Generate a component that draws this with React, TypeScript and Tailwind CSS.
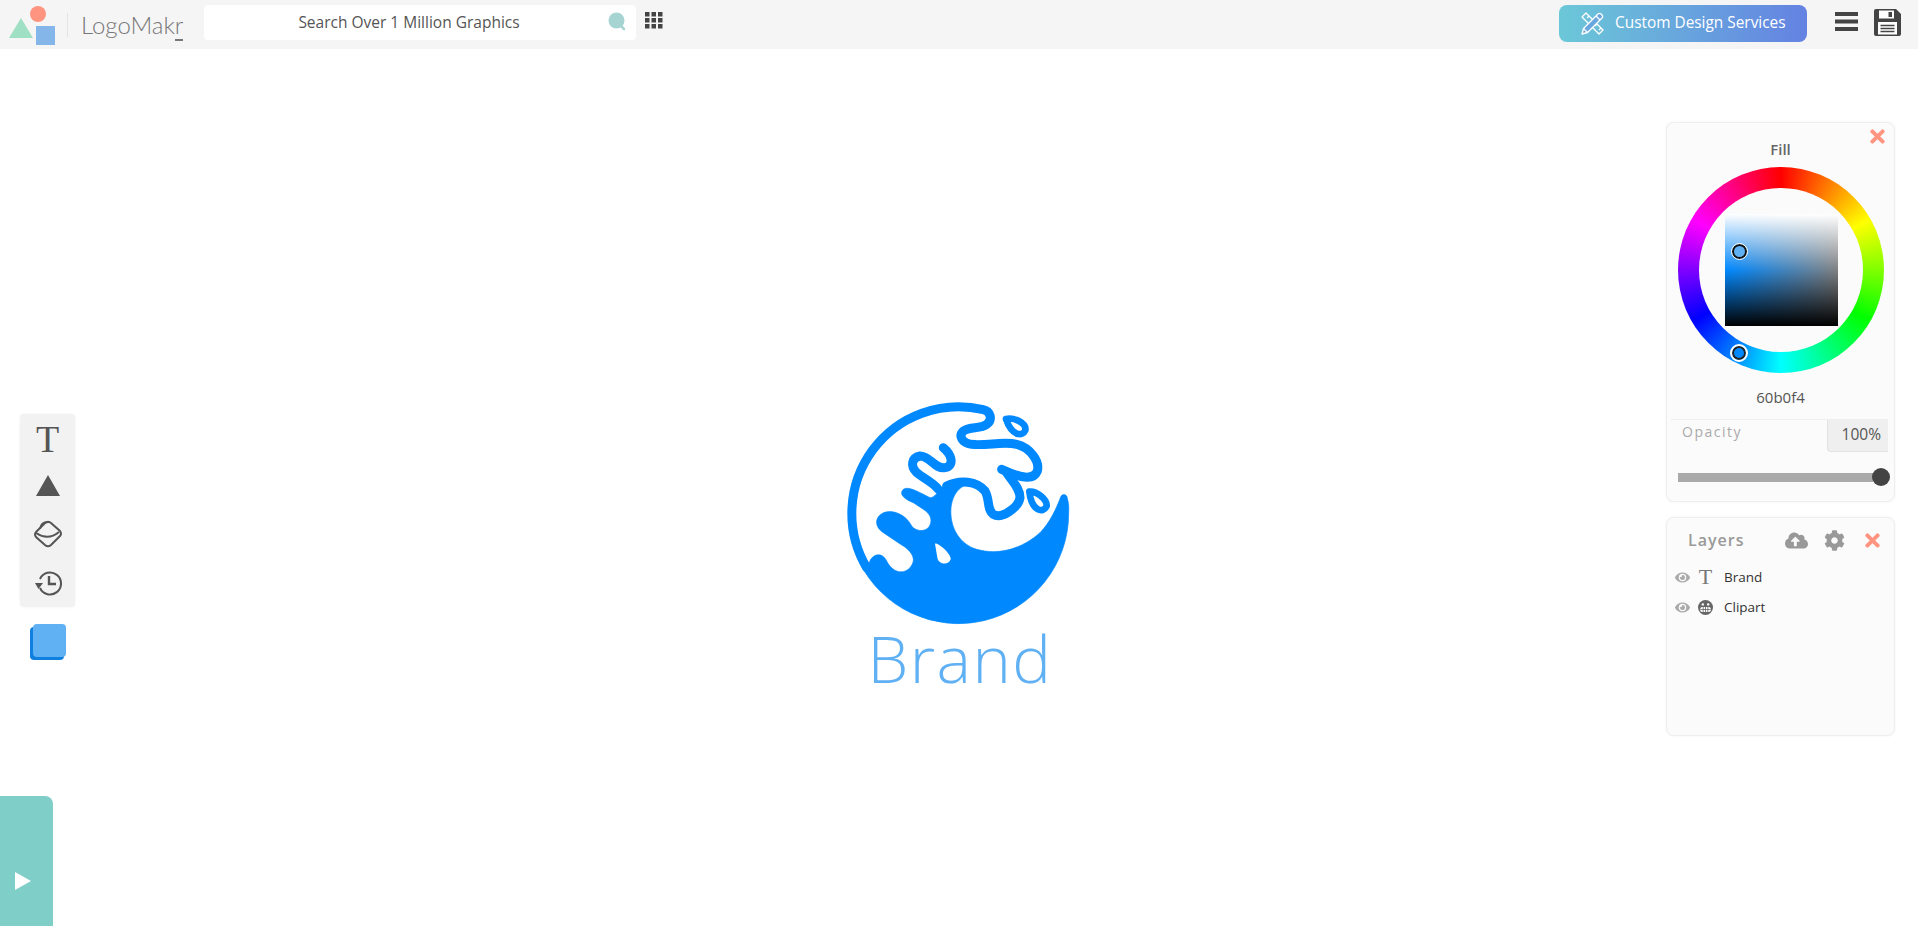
import React from 'react';
import { FaCloudUploadAlt, FaCog, FaEye, FaTimes } from 'react-icons/fa';

const sans = 'font-["Open_Sans",sans-serif]';

const BrandMark = () => (
  <svg viewBox="0 0 56 44" className="w-[56px] h-[44px]">
    <polygon points="9,35 21,15 33,35" fill="#9fe0c4" />
    <circle cx="38" cy="11" r="8" fill="#ff9580" />
    <rect x="36" y="23" width="19" height="19" fill="#85b6ea" />
  </svg>
);

const SplashLogo = () => (
  <svg width="260" height="240" viewBox="0 0 780 720" fill="none">
    <path
      d="M118,515 C125,490 155,480 170,510 C185,540 215,555 240,530 C262,505 245,480 215,462 L160,425 C135,408 135,385 150,372 C175,350 225,365 245,405 C260,425 300,425 303,390 C303,365 280,355 250,335 C225,325 205,310 220,295 C235,285 260,300 300,320 C315,320 325,300 335,290 C365,265 410,262 440,275 C410,275 370,290 363,350 C358,410 390,460 440,475 C510,495 580,470 630,425 C660,395 680,350 692,318 C697,306 712,310 712,322 C718,345 716,355 716,367 A331,331 0 0 1 89,515 Z"
      fill="#0088ff"
      stroke="#0088ff"
      strokeWidth="2"
      strokeLinejoin="round"
    />
    <g stroke="#0088ff" strokeWidth="27" strokeLinecap="round" strokeLinejoin="round">
      <path d="M110,530 A320,320 0 0 1 460,56 C480,60 490,85 470,100 C450,115 420,105 400,120 C385,135 395,155 425,160 C470,165 520,150 560,160 C600,170 630,210 622,240 C610,270 570,260 515,235" />
      <path d="M340,170 C365,190 375,225 345,230 C315,235 300,195 270,195 C245,200 240,225 260,245 C280,262 310,275 325,295" />
      <path d="M350,285 C390,265 440,270 465,300 C480,325 470,355 490,370 C515,385 565,350 570,320 C570,290 545,270 530,245" />
      <path strokeWidth="20" d="M528,84 C550,78 590,95 586,118 C578,138 545,135 528,84 Z" />
      <path strokeWidth="20" d="M598,302 C620,300 652,325 650,345 C640,368 605,362 598,302 Z" />
    </g>
    <path d="M315,458 C325,455 365,490 362,505 C355,525 325,520 322,500 Z" fill="#ffffff" />
  </svg>
);

const BucketIcon = () => (
  <svg width="30" height="28" viewBox="0 0 30 28" fill="none" stroke="#555" strokeWidth="2">
    <path d="M3,12 L12,3 Q15,0.5 18,3 L27,11 Q29,14 27,16 L18,25 Q15,27.5 12,25 L3,17 Q1,14.5 3,12 Z" />
    <path d="M3,13 Q15,21 26,12" />
    <path d="M7,9 Q8,1 17,2" />
  </svg>
);

const HistoryIcon = () => (
  <svg width="28" height="26" viewBox="0 0 28 26" fill="none" stroke="#555" strokeWidth="2">
    <path d="M6,9 A11,11 0 1 1 6,18" />
    <path d="M1,13 L9,13 L4.5,19 Z" fill="#555" stroke="none" />
    <path d="M15,6 V14 H22" strokeWidth="2.4" />
  </svg>
);

const SearchIcon = () => (
  <svg width="19" height="19" viewBox="0 0 19 19">
    <circle cx="8.5" cy="8.5" r="8" fill="#a5d4d2" />
    <path d="M13,14 L16,17" stroke="#a5d4d2" strokeWidth="2.5" strokeLinecap="round" />
  </svg>
);

const GridIcon = () => (
  <svg width="18" height="17" viewBox="0 0 18 17" fill="#444">
    {[0, 6.5, 13].map((x) =>
      [0, 6, 12].map((y) => <rect key={`${x}-${y}`} x={x} y={y} width="4.5" height="4.5" />)
    )}
  </svg>
);

const MenuIcon = () => (
  <svg width="23" height="19" viewBox="0 0 23 19" fill="#444">
    <rect y="0" width="23" height="4" />
    <rect y="7.5" width="23" height="4" />
    <rect y="15" width="23" height="4" />
  </svg>
);

const RulerPencilIcon = () => (
  <svg width="23" height="23" viewBox="0 0 23 23" fill="none" stroke="#fff" strokeWidth="1.3" strokeLinejoin="round">
    <path d="M1,5 L5,1 L22,18 L18,22 Z" />
    <path d="M6,6 L8,4 M10,10 L12,8 M14,14 L16,12 M18,18 L20,16" />
    <path d="M1,22 L2.5,16.5 L17,2 Q18.5,0.8 20,2 L21,3 Q22.2,4.5 21,6 L6.5,20.5 Z" fill="#6aa6de" />
    <path d="M2.5,16.5 L6.5,20.5 M15,4 L19,8" />
  </svg>
);

const FloppyIcon = () => (
  <svg width="27" height="27" viewBox="0 0 27 27">
    <path d="M2,0 H22 L27,5 V25 Q27,27 25,27 H2 Q0,27 0,25 V2 Q0,0 2,0 Z" fill="#444" />
    <rect x="5" y="1.5" width="15" height="8" fill="#fff" />
    <rect x="14.5" y="3" width="3.5" height="5" fill="#444" />
    <rect x="4" y="13" width="19" height="12.5" fill="#fff" />
    <path d="M6.5,16.5 H20.5 M6.5,19.5 H20.5 M6.5,22.5 H20.5" stroke="#444" strokeWidth="1.4" />
  </svg>
);

const TeethFaceIcon = () => (
  <svg width="15" height="15" viewBox="0 0 15 15">
    <circle cx="7.5" cy="7.5" r="7.5" fill="#666" />
    <circle cx="4.8" cy="4.4" r="1.2" fill="#fff" />
    <circle cx="10.2" cy="4.4" r="1.2" fill="#fff" />
    <rect x="2.2" y="7" width="10.6" height="5" rx="2" fill="#fff" />
    <path d="M2.5,9.5 H12.5 M5.2,7 V12 M7.5,7 V12 M9.8,7 V12" stroke="#666" strokeWidth="0.8" />
  </svg>
);

const App: React.FC = () => {
  return (
    <div className={`relative flex flex-col h-screen overflow-hidden bg-white ${sans}`}>
      {/* Header */}
      <div className="flex items-center h-[49px] shrink-0 bg-[#f5f5f5]">
        <BrandMark />
        <div className="w-px h-[24px] ml-[11px] bg-[#e4e4e4]"></div>
        <div className="ml-[13px] w-[110px] text-[24px] leading-none text-[#777] font-['Lato',sans-serif] font-light">
          LogoMak<span className="border-b-2 border-[#777]">r</span>
        </div>
        <div className="flex items-center justify-center relative w-[432px] h-[35px] ml-[13px] -mt-[4px] pr-[22px] pt-[1px] rounded bg-white text-[15.5px] text-[#555]">
          Search Over 1 Million Graphics
          <span className="absolute right-[9px] top-[7px]">
            <SearchIcon />
          </span>
        </div>
        <span className="ml-[9px] -mt-[8px]">
          <GridIcon />
        </span>
        <div className="flex items-center ml-auto -mt-[3px] w-[248px] h-[37px] pl-[22px] gap-[11px] rounded-lg bg-[linear-gradient(to_right,#6bc8d8,#6482e2)] text-[15.4px] text-white">
          <RulerPencilIcon />
          Custom Design Services
        </div>
        <span className="flex ml-[28px] -mt-[6px]">
          <MenuIcon />
        </span>
        <span className="flex ml-[16px] mr-[17px] -mt-[5px]">
          <FloppyIcon />
        </span>
      </div>

      {/* Canvas */}
      <div className="relative flex-1">
        <div className="flex flex-col items-center pt-[342px] pl-[2px]">
          <SplashLogo />
          <div className="-mt-[13px] text-[65px] tracking-[1.5px] leading-[80px] text-[#60b0f4] font-light">
            Brand
          </div>
        </div>

        {/* Left tools */}
        <div className="absolute left-[20px] top-[365px] flex flex-col items-center">
          <div className="flex flex-col items-center w-[55px] h-[193px] rounded bg-[#f2f2f2] shadow-[0_0_3px_rgba(0,0,0,0.06)] text-[#555]">
            <div className="mt-[6px] h-[38px] text-[38px] leading-[38px] font-['Liberation_Serif',serif]">T</div>
            <svg className="mt-[17px]" width="24" height="21" viewBox="0 0 24 21">
              <polygon points="12,0 24,21 0,21" fill="#555" />
            </svg>
            <div className="mt-[24px]">
              <BucketIcon />
            </div>
            <div className="mt-[22px]">
              <HistoryIcon />
            </div>
          </div>
          <div className="relative mt-[17px] w-[36px] h-[36px]">
            <div className="absolute left-0 top-[3px] w-[34px] h-[33px] rounded bg-[#1080e0]"></div>
            <div className="absolute left-[3px] top-0 w-[33px] h-[33px] rounded bg-[#60b0f4]"></div>
          </div>
        </div>

        {/* Right panels */}
        <div className="absolute right-[23px] top-[73px] flex flex-col gap-[15px] w-[229px]">
          <div className="relative h-[380px] rounded-lg border border-[#eeeeee] bg-[#fbfbfb] shadow-[0_0_3px_rgba(0,0,0,0.05)]">
            <FaTimes className="absolute right-[6px] top-[3px] text-[#ff9580]" size={21} />
            <div className="mt-[16px] h-[20px] text-center text-[15px] font-semibold leading-[20px] text-[#666]">Fill</div>
            <div className="relative flex items-center justify-center mx-auto mt-[8px] w-[206px] h-[206px] rounded-full bg-[conic-gradient(#ff0000,#ffff00,#00ff00,#00ffff,#0000ff,#ff00ff,#ff0000)]">
              <div className="flex items-center justify-center w-[164px] h-[164px] rounded-full bg-[#fbfbfb]">
                <div className="ml-[1px] w-[113px] h-[112px] bg-[linear-gradient(to_bottom,#ffffff,transparent_50%,#000000),linear-gradient(to_right,#0088ff,#808080)]"></div>
              </div>
              <div className="absolute left-[54px] top-[77px] w-[15px] h-[15px] rounded-full border-2 border-[#111] bg-[#60b0f4] outline-1 outline-white"></div>
              <div className="absolute left-[54px] top-[179px] w-[14px] h-[14px] rounded-full border-2 border-[#222] bg-[#0088ff] outline-2 outline-white"></div>
            </div>
            <div className="mt-[14px] h-[20px] text-center text-[15px] leading-[20px] text-[#555]">60b0f4</div>
            <div className="flex justify-between mt-[12px] ml-[4px] mr-[6px] h-[33px] border-t border-[#eeeeee]">
              <span className="ml-[11px] mt-[1px] text-[14px] tracking-[1.5px] text-[#aaa]">Opacity</span>
              <span className="w-[61px] pr-[7px] pt-[3px] text-right text-[15.5px] text-[#555] bg-[#efefef] border-b border-l border-[#e2e2e2] rounded-bl">100%</span>
            </div>
            <div className="flex items-center mt-[16px] ml-[11px] mr-[4px] h-[18px]">
              <div className="flex-1 h-[9px] bg-[#aaaaaa]"></div>
              <div className="w-[18px] h-[18px] -ml-px rounded-full bg-[#444]"></div>
            </div>
          </div>

          <div className="relative h-[219px] rounded-lg border border-[#eeeeee] bg-[#fbfbfb] shadow-[0_0_3px_rgba(0,0,0,0.05)]">
            <div className="flex items-center mt-[10px] h-[24px] pl-[21px]">
              <span className="w-[97px] text-[16px] font-semibold tracking-[1px] text-[#999]">Layers</span>
              <FaCloudUploadAlt className="text-[#999]" size={23} />
              <FaCog className="ml-[16px] text-[#999]" size={21} />
              <FaTimes className="ml-[17px] text-[#ff9580]" size={21} />
            </div>
            <div className="mt-[10px]">
              <div className="flex items-center h-[30px] pl-[8px] text-[13.5px] text-[#333]">
                <FaEye className="text-[#aaa]" size={15} />
                <span className="ml-[8px] w-[15px] text-center text-[22px] leading-none text-[#777] font-['Liberation_Serif',serif]">T</span>
                <span className="ml-[11px]">Brand</span>
              </div>
              <div className="flex items-center h-[30px] pl-[8px] text-[13.5px] text-[#333]">
                <FaEye className="text-[#aaa]" size={15} />
                <span className="ml-[8px] flex">
                  <TeethFaceIcon />
                </span>
                <span className="ml-[11px]">Clipart</span>
              </div>
            </div>
          </div>
        </div>

        {/* Animation drawer */}
        <div className="absolute left-0 bottom-0 flex items-center pl-[15px] w-[53px] h-[130px] rounded-tr-lg bg-[#80cec8]">
          <svg className="mt-[40px]" width="16" height="18" viewBox="0 0 16 18">
            <polygon points="0,0 16,9 0,18" fill="#fff" />
          </svg>
        </div>
      </div>
    </div>
  );
};

export default App;
